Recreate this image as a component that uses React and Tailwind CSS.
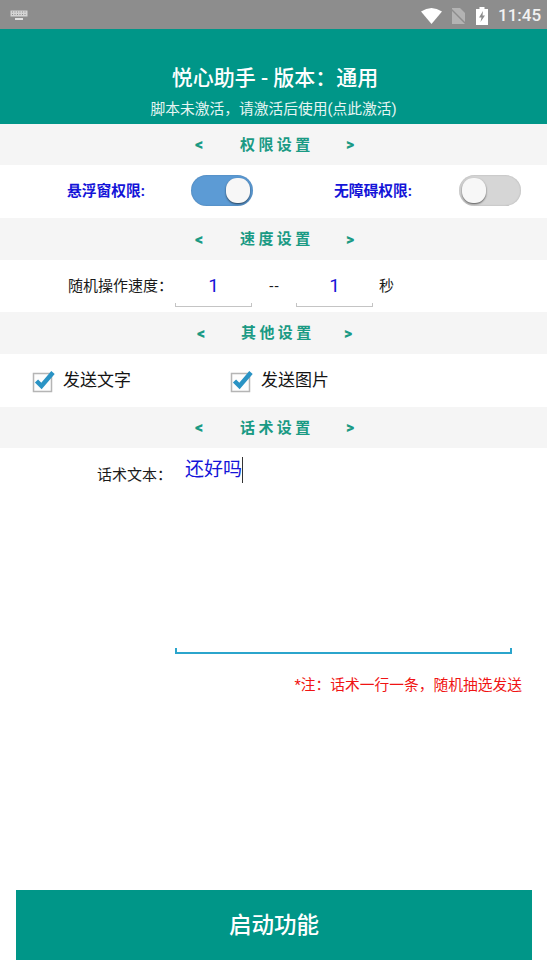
import React from 'react';

const cjk = { fontFamily: '"Roboto", "Noto Sans CJK SC", sans-serif' };

const SectionTitle = ({ title, height = 'h-[42px]', leftGap = 'ml-[195px]', midGap = 'w-[37px]', endGap = 'w-[34px]' }) => (
  <div className={`${height} bg-[#f5f5f5] flex items-center pt-[1px] text-[#1a9a84] font-bold`}>
    <span className={`${leftGap} w-[8px] text-[16px] leading-none font-black`}>&lt;</span>
    <span className={midGap} />
    <span className="w-[72px] text-[15px] tracking-[3.4px] whitespace-nowrap leading-none">{title}</span>
    <span className={endGap} />
    <span className="w-[8px] text-[16px] leading-none font-black">&gt;</span>
  </div>
);

const Toggle = ({ on }) => (
  <div
    className={`w-[62px] h-[31px] mb-[2px] rounded-full flex items-center px-[3px] shadow-[inset_0_0_2px_rgba(0,0,0,0.2)] ${
      on ? 'bg-[#5c9bd5] justify-end' : 'bg-[#d6d6d6] justify-start'
    }`}
  >
    <div className="w-[24px] h-[25px] rounded-[11px] bg-[#f7f7f7] shadow-[0_1px_2px_rgba(0,0,0,0.6)]" />
  </div>
);

const Check = () => (
  <svg width="24" height="24" viewBox="0 0 24 24" className="shrink-0">
    <rect x="1.500" y="4.500" width="18" height="18" fill="#fdfdfd" stroke="#b5b5b5" strokeWidth="1.500" />
    <path d="M4.500 12 L9.500 17 L21 3.500" fill="none" stroke="#2a93c4" strokeWidth="4.500" />
  </svg>
);

const NumberField = ({ value }) => (
  <div className="w-[77px] h-[36px] relative flex items-center justify-center text-[#1414d8] text-[19px] pb-[5px]">
    {value}
    <div className="absolute left-0 right-0 bottom-0 h-[4px] border-l border-r border-b border-[#c4c4c4]" />
  </div>
);

export default function App() {
  return (
    <div className="w-[547px] h-[965px] bg-white flex flex-col overflow-hidden" style={cjk}>
      {/* status bar */}
      <div className="h-[29px] bg-[#8d8d8d] flex items-center text-white shrink-0">
        <svg width="18" height="10" viewBox="0 0 18 10" className="ml-[10px]">
          <rect x="0.500" y="0.500" width="17" height="6" fill="#d4d4d4" />
          <path d="M2 2h1M4.500 2h1M7 2h1M9.500 2h1M12 2h1M14.500 2h1M2 4.500h1M4.500 4.500h1M7 4.500h1M9.500 4.500h1M12 4.500h1M14.500 4.500h1" stroke="#8d8d8d" strokeWidth="1" />
          <rect x="5" y="8" width="8" height="2" fill="#e2e2e2" />
        </svg>
        <svg width="21" height="16" viewBox="0 0 21 16" className="ml-[393px] mt-[2px]">
          <path d="M0 3.500 Q10.500 -3.500 21 3.500 L10.500 16 Z" fill="#fff" />
        </svg>
        <svg width="15" height="16" viewBox="0 0 15 16" className="ml-[9px] mt-[2px]">
          <path d="M1 0 H9 L14 5 V16 H1 Z" fill="#b3b3b3" />
          <path d="M0 1 L15 16" stroke="#8d8d8d" strokeWidth="1.500" />
        </svg>
        <svg width="12" height="18" viewBox="0 0 12 18" className="ml-[10px] mt-[2px]">
          <path d="M3.500 0 H8.500 V2 H12 V18 H0 V2 H3.500 Z" fill="#fff" />
          <path d="M7 4 L3 10.500 H5.500 L4.500 15 L9 8.500 H6.500 Z" fill="#8d8d8d" />
        </svg>
        <span className="ml-[10px] mt-[2px] text-[17px] leading-none font-medium text-[#f2f2f2]" style={{ fontFamily: 'Roboto, sans-serif' }}>11:45</span>
      </div>

      {/* header */}
      <div className="h-[95px] bg-[#009688] shrink-0 flex flex-col items-center text-white pt-[35px]">
        <div className="text-[21px] leading-[28px] font-medium pl-[3px]">悦心助手 - 版本：通用</div>
        <div className="text-[14.750px] leading-[20px] mt-[7px] text-[#e6f5f3]">脚本未激活，请激活后使用(点此激活)</div>
      </div>

      <SectionTitle title="权限设置" height="h-[41px]" />
      <div className="h-[53px] flex items-center font-bold text-[14.750px] text-[#1414d8]">
        <span className="ml-[67px] w-[124px] whitespace-nowrap">悬浮窗权限:</span>
        <Toggle on />
        <span className="ml-[81px] w-[125px] whitespace-nowrap">无障碍权限:</span>
        <Toggle />
      </div>

      <SectionTitle title="速度设置" />
      <div className="h-[52px] flex items-center text-[15px] text-[#1a1a1a]">
        <span className="ml-[68px] w-[107px] whitespace-nowrap">随机操作速度：</span>
        <div className="mt-[5px]"><NumberField value="1" /></div>
        <span className="w-[44px] text-center text-[15px] pl-[1px] tracking-[1px]" style={{ fontVariantLigatures: 'none' }}>--</span>
        <div className="mt-[5px]"><NumberField value="1" /></div>
        <span className="ml-[6px]">秒</span>
      </div>

      <SectionTitle title="其他设置" leftGap="ml-[197px]" midGap="w-[36px]" endGap="w-[31px]" />
      <div className="h-[53px] flex items-center text-[17px] text-[#141414]">
        <div className="ml-[32px] w-[198px] flex items-center gap-[7px]">
          <Check />
          <span>发送文字</span>
        </div>
        <div className="flex items-center gap-[7px]">
          <Check />
          <span>发送图片</span>
        </div>
      </div>

      <SectionTitle title="话术设置" height="h-[41px]" />

      {/* script text */}
      <div className="flex pt-[8px] shrink-0">
        <div className="w-[175px] pr-[3px] pt-[7px] text-right text-[15px] leading-[24px] text-[#1a1a1a]">话术文本：</div>
        <div className="w-[337px] h-[198px] relative">
          <div className="pl-[10px] text-[19px] leading-[28px] text-[#1414d8] flex items-center">
            还好吗<span className="w-px h-[26px] bg-[#333]" />
          </div>
          <div className="absolute left-0 right-0 bottom-0 h-[6px] border-l-2 border-r-2 border-b-2 border-[#2ba5cc]" />
        </div>
      </div>
      <div className="mt-[20px] pr-[25px] text-right text-[14.750px] leading-[22px] text-[#f01414]">*注：话术一行一条，随机抽选发送</div>

      {/* start */}
      <div className="mt-auto mb-[5px] mx-[16px] w-[516px] h-[70px] pt-[2px] bg-[#009688] flex items-center justify-center text-white text-[22.500px] font-medium">
        启动功能
      </div>
    </div>
  );
}
